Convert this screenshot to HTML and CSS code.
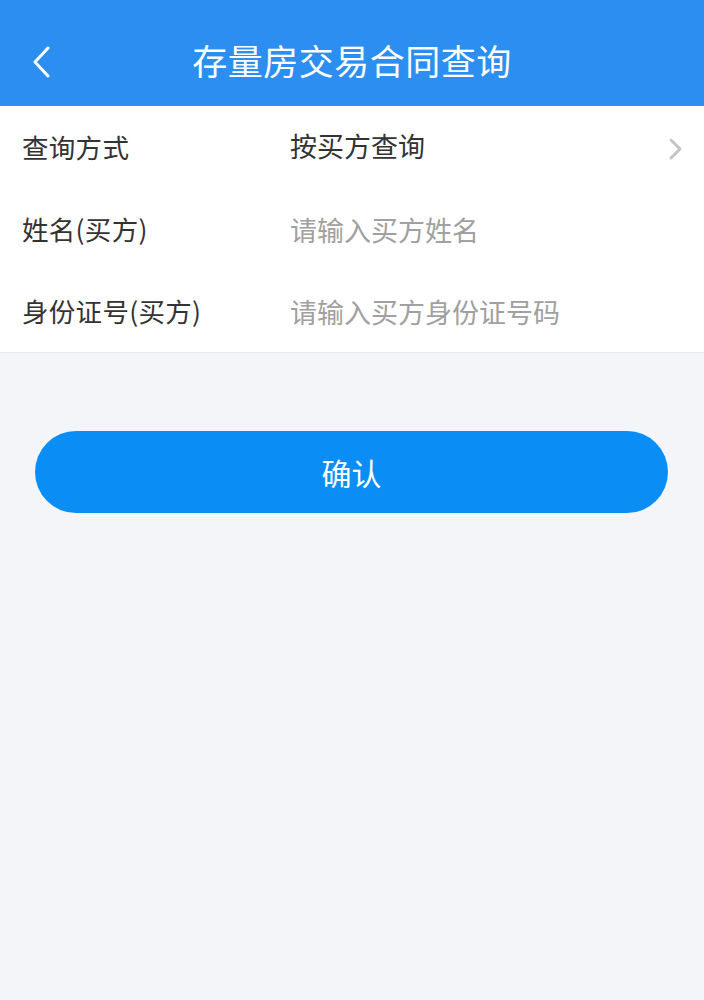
FILE: index.html
```html
<!DOCTYPE html>
<html lang="zh-CN">
<head>
<meta charset="utf-8">
<title>存量房交易合同查询</title>
<link rel="stylesheet" href="styles.css">
</head>
<body>
<div class="page">
  <header class="nav">
    <span class="back">
      <svg width="20" height="32" viewBox="0 0 20 32"><polyline points="16,2 3,16 16,30" fill="none" stroke="#ffffff" stroke-width="3" stroke-linecap="round" stroke-linejoin="round"/></svg>
    </span>
    <h1 class="title">存量房交易合同查询</h1>
  </header>
  <section class="form">
    <div class="row">
      <span class="label">查询方式</span>
      <span class="value raised">按买方查询</span>
      <span class="arrow">
        <svg width="16" height="24" viewBox="0 0 16 24"><polyline points="3,3 12,12 3,21" fill="none" stroke="#c4c4c4" stroke-width="3" stroke-linecap="round" stroke-linejoin="round"/></svg>
      </span>
    </div>
    <div class="row">
      <span class="label">姓名(买方)</span>
      <span class="value placeholder">请输入买方姓名</span>
    </div>
    <div class="row">
      <span class="label">身份证号(买方)</span>
      <span class="value placeholder">请输入买方身份证号码</span>
    </div>
  </section>
  <div class="actions">
    <button class="confirm">确认</button>
  </div>
</div>
</body>
</html>
```
FILE: styles.css
```css
* { box-sizing: border-box; }
html, body {
  margin: 0;
  padding: 0;
  background: #f3f5f9;
  font-family: "Noto Sans CJK SC", "Noto Sans", sans-serif;
}
.page {
  width: 704px;
  min-height: 1000px;
  background: #f3f5f9;
}
.nav {
  height: 106px;
  background: #2b8ef0;
  display: flex;
  align-items: center;
  justify-content: center;
  position: relative;
  padding-top: 12px;
}
.back {
  position: absolute;
  left: 32px;
  top: 46px;
  display: flex;
}
.title {
  margin: 0;
  color: #ffffff;
  font-size: 35px;
  font-weight: 400;
  line-height: 1;
  letter-spacing: 0.5px;
}
.form {
  background: #ffffff;
  padding-top: 0;
  border-bottom: 1px solid #e6e8ec;
}
.row {
  height: 82px;
  display: flex;
  align-items: center;
  padding-left: 22px;
  padding-right: 20px;
}
.label {
  width: 268px;
  font-size: 26.5px;
  color: #333333;
  line-height: 1;
  letter-spacing: 0.3px;
}
.value {
  flex: 1;
  font-size: 27px;
  color: #333333;
  line-height: 1;
}
.value.raised {
  margin-top: -4px;
}
.value.placeholder {
  color: #a0a0a0;
}
.arrow {
  display: flex;
  margin-top: 4px;
}
.actions {
  padding: 78px 36px 0 35px;
}
.confirm {
  width: 100%;
  height: 82px;
  border: none;
  border-radius: 41px;
  background: #0a8ef6;
  color: #ffffff;
  font-family: "Noto Sans CJK SC", "Noto Sans", sans-serif;
  font-size: 30px;
  line-height: 1;
  padding: 0;
}
```
